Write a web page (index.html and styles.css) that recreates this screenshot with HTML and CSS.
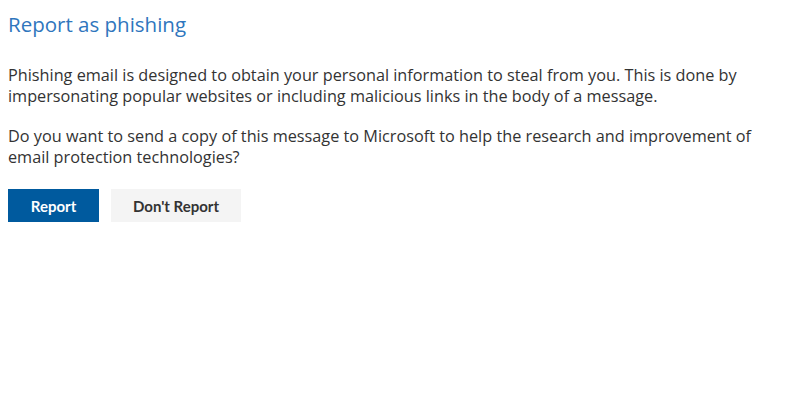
FILE: index.html
```html
<!DOCTYPE html>
<html>
<head>
<meta charset="utf-8">
<link rel="stylesheet" href="styles.css">
</head>
<body>
<div class="dialog">
  <h1 class="title">Report as phishing</h1>
  <p class="text">Phishing email is designed to obtain your personal information to steal from you. This is done by impersonating popular websites or including malicious links in the body of a message.</p>
  <p class="text">Do you want to send a copy of this message to Microsoft to help the research and improvement of email protection technologies?</p>
  <div class="actions">
    <button class="btn btn-primary">Report</button>
    <button class="btn btn-secondary">Don't Report</button>
  </div>
</div>
</body>
</html>
```
FILE: styles.css
```css
html, body {
  margin: 0;
  padding: 0;
  background: #ffffff;
}
.dialog {
  padding: 10px 8px;
  font-family: "Open Sans", "Noto Sans", sans-serif;
  color: #333333;
}
.title {
  margin: 0;
  font-size: 20.5px;
  font-weight: 400;
  color: #2f76bd;
  line-height: 28px;
}
.text {
  margin: 27px 0 0 0;
  font-size: 16.25px;
  line-height: 21px;
  max-width: 780px;
}
.text + .text {
  margin-top: 19px;
}
.actions {
  display: flex;
  gap: 12px;
  margin-top: 21px;
}
.btn {
  font-family: "Lato", sans-serif;
  font-weight: 700;
  font-size: 15px;
  height: 33px;
  border: none;
  padding: 0;
  cursor: pointer;
}
.btn-primary {
  width: 91px;
  background: #005a9e;
  color: #ffffff;
}
.btn-secondary {
  width: 130px;
  background: #f4f4f4;
  color: #333333;
}
```
